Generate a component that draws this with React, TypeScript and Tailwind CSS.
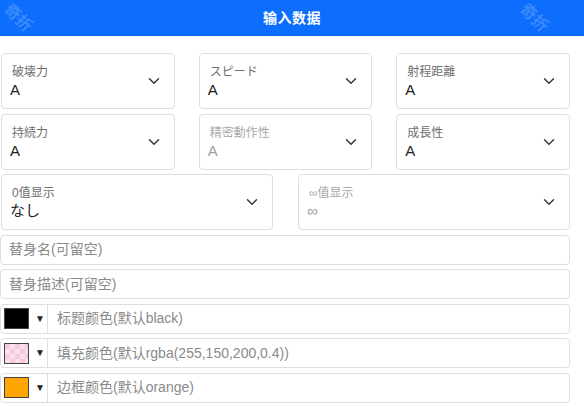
import React from 'react';

const font = { fontFamily: '"Liberation Sans", "Noto Sans CJK SC", sans-serif' };

function Chevron() {
  return (
    <svg width="12" height="12" viewBox="0 0 16 16" className="shrink-0">
      <path d="m2 5 6 6 6-6" fill="none" stroke="#343a40" strokeWidth="2" strokeLinecap="round" strokeLinejoin="round" />
    </svg>
  );
}

function SelectBox({ label, value, disabled = false }: { label: string; value: string; disabled?: boolean }) {
  return (
    <div className="flex-1 min-w-0 h-[56px] rounded-[4px] border border-[#dedede] bg-white flex items-center pr-[14px]">
      <div className="flex-1 min-w-0 pl-[9px] pt-[1px]">
        <p className={`text-[12px] leading-[16px] pl-px ${disabled ? 'text-[#a8a8a8]' : 'text-[#6e6e6e]'}`}>{label}</p>
        <p className={`text-[15px] leading-[18px] mt-[1px] -ml-[1px] ${disabled ? 'text-[#a0a0a0]' : 'text-[#222]'}`}>{value}</p>
      </div>
      <Chevron />
    </div>
  );
}

function TextInput({ placeholder }: { placeholder: string }) {
  return (
    <div className="h-[30px] rounded-[4px] border border-[#dedede] bg-white flex items-center pl-[8px]">
      <span className="text-[14px] text-[#8a8a8a]">{placeholder}</span>
    </div>
  );
}

function Checker() {
  const cells = [];
  for (let r = 0; r < 4; r++) {
    for (let c = 0; c < 5; c++) {
      if ((r + c) % 2 === 0) cells.push(<rect key={`${r}-${c}`} x={c * 5} y={r * 5} width="5" height="5" fill="#f6c9de" />);
    }
  }
  return (
    <svg width="24" height="20" viewBox="0 0 24 20" className="block">
      <rect width="24" height="20" fill="#fbe1ed" />
      {cells}
    </svg>
  );
}

function ColorRow({ swatch, placeholder }: { swatch: 'black' | 'pink' | 'orange'; placeholder: string }) {
  return (
    <div className="h-[30px] rounded-[4px] border border-[#dedede] bg-white flex items-stretch">
      <div className="w-[47px] flex items-center pl-[3px] gap-[6px] border-r border-[#dedede]">
        <div className="w-[25px] h-[21px] border border-[#444] overflow-hidden">
          {swatch === 'black' && <div className="w-full h-full bg-black" />}
          {swatch === 'orange' && <div className="w-full h-full bg-[#ffa500]" />}
          {swatch === 'pink' && <Checker />}
        </div>
        <span className="text-[10px] text-[#222] leading-none">▼</span>
      </div>
      <div className="flex items-center pl-[9px]">
        <span className="text-[14px] text-[#8a8a8a]">{placeholder}</span>
      </div>
    </div>
  );
}

export default function App() {
  return (
    <div className="w-[584px] h-[406px] bg-white overflow-hidden flex flex-col" style={font}>
      <header className="relative h-[36px] shrink-0 bg-[#0d6efd] flex items-center justify-center overflow-hidden">
        <span className="text-white font-bold text-[14px] tracking-[0.5px]">输入数据</span>
        <span className="absolute left-[2px] top-[6px] rotate-45 text-[16px] font-bold text-white/20">奇折</span>
        <span className="absolute left-[518px] top-[6px] rotate-45 text-[16px] font-bold text-white/20">奇折</span>
      </header>

      <div className="flex">
        <main className="flex-1 pt-[17px] flex flex-col gap-[4.5px]">
          <div className="flex gap-[24px] pl-px">
            <SelectBox label="破壊力" value="A" />
            <SelectBox label="スピード" value="A" />
            <SelectBox label="射程距離" value="A" />
          </div>
          <div className="flex gap-[24px] pl-px">
            <SelectBox label="持続力" value="A" />
            <SelectBox label="精密動作性" value="A" disabled />
            <SelectBox label="成長性" value="A" />
          </div>
          <div className="flex gap-[25px] pl-px">
            <SelectBox label="0值显示" value="なし" />
            <SelectBox label="∞值显示" value="∞" disabled />
          </div>
          <TextInput placeholder="替身名(可留空)" />
          <TextInput placeholder="替身描述(可留空)" />
          <ColorRow swatch="black" placeholder="标题颜色(默认black)" />
          <ColorRow swatch="pink" placeholder="填充颜色(默认rgba(255,150,200,0.4))" />
          <ColorRow swatch="orange" placeholder="边框颜色(默认orange)" />
        </main>
        <div className="w-[14px] shrink-0" />
      </div>
    </div>
  );
}
